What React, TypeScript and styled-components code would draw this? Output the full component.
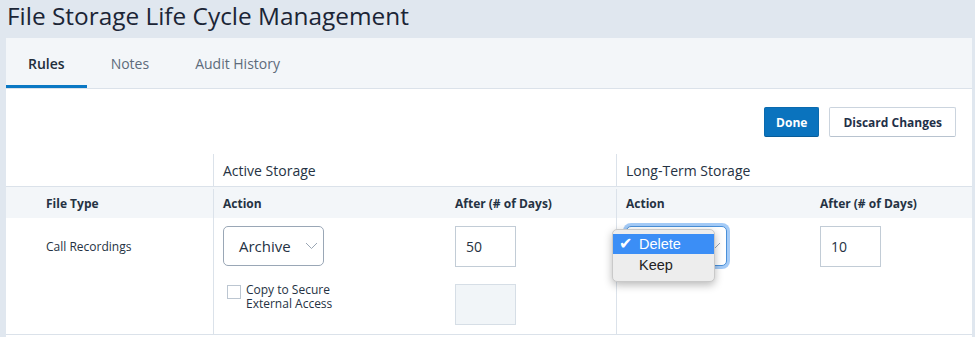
import React from "react";
import styled, { createGlobalStyle, css } from "styled-components";

const Global = createGlobalStyle`
  html, body { margin: 0; padding: 0; }
  body {
    background: #e0e7ef;
    font-family: "Open Sans", "Noto Sans", sans-serif;
    color: #253243;
    width: 975px;
    height: 337px;
    overflow: hidden;
  }
  * { box-sizing: border-box; }
`;

const Title = styled.h1`
  margin: 0;
  height: 38px;
  padding: 0 7px;
  font-size: 24.4px;
  line-height: 31px;
  font-weight: 400;
  color: #1b2536;
  white-space: nowrap;
`;

const Panel = styled.div`
  margin-left: 6px;
  width: 966px;
  background: #ffffff;
  height: 299px;
`;

const TabBar = styled.div`
  display: flex;
  height: 51px;
  background: #f3f6f9;
  border-bottom: 1px solid #dbe2ea;
`;

const Tab = styled.div<{ $active?: boolean }>`
  display: flex;
  align-items: center;
  padding: 0 22px;
  margin-right: 2px;
  font-size: 14px;
  font-weight: ${(p) => (p.$active ? 600 : 400)};
  color: ${(p) => (p.$active ? "#222e3c" : "#5d6b7b")};
  ${(p) =>
    p.$active &&
    css`
      box-shadow: inset 0 -3px 0 #0a78c4;
    `}
`;

const Toolbar = styled.div`
  display: flex;
  justify-content: flex-end;
  gap: 10px;
  padding: 18px 16px 0 0;
`;

const Button = styled.button<{ $primary?: boolean }>`
  height: 30px;
  padding: 0 ${(p) => (p.$primary ? "11px" : "13px")};
  font-family: "Open Sans", sans-serif;
  font-size: 12px;
  font-weight: 700;
  border-radius: 2px;
  cursor: pointer;
  ${(p) =>
    p.$primary
      ? css`
          background: #0a73be;
          color: #ffffff;
          border: 1px solid #0a6aae;
          border-bottom-color: #085c98;
        `
      : css`
          background: #ffffff;
          color: #1f3048;
          border: 1px solid #cbd4de;
          border-bottom-color: #b8c3cf;
        `}
`;

const Table = styled.div`
  margin-top: 14px;
  border-bottom: 1px solid #dbe2ea;
`;

const Row = styled.div<{ $variant: "group" | "head" | "body" }>`
  display: grid;
  grid-template-columns: 207px 232px 171px 194px 162px;
  ${(p) =>
    p.$variant === "group" &&
    css`
      height: 35px;
      padding-top: 3px;
    `}
  ${(p) =>
    p.$variant === "head" &&
    css`
      height: 32px;
      padding-top: 2px;
      background: #f3f6f9;
      border-top: 1px solid #dbe2ea;
    `}
  ${(p) =>
    p.$variant === "body" &&
    css`
      height: 116px;
    `}
`;

const Cell = styled.div<{ $divider?: boolean; $span?: number; $first?: boolean; $kind?: "group" | "head" | "body" }>`
  display: flex;
  flex-direction: column;
  justify-content: ${(p) => (p.$kind === "body" ? "flex-start" : "center")};
  gap: 17px;
  padding: ${(p) => (p.$kind === "body" ? "8px" : "0")} 10px 0
    ${(p) => (p.$first ? "40px" : p.$divider ? "9px" : "10px")};
  ${(p) => p.$span && css`grid-column: span ${p.$span};`}
  border-left: ${(p) => (p.$divider ? "1px solid #dbe2ea" : "none")};
  font-size: ${(p) => (p.$kind === "group" ? "14px" : "12px")};
  font-weight: ${(p) => (p.$kind === "head" ? 700 : 400)};
  color: #253243;
  white-space: nowrap;
`;

const BodyText = styled.div`
  height: 40px;
  display: flex;
  align-items: center;
  font-size: 12px;
  color: #253243;
`;

const SelectWrap = styled.div`
  position: relative;
  width: 101px;
`;

const SelectBox = styled.div<{ $focused?: boolean }>`
  width: 101px;
  height: 40px;
  display: flex;
  align-items: center;
  justify-content: space-between;
  padding: 0 5px 0 15px;
  border-radius: 5px;
  font-size: 15px;
  color: #253243;
  background: #fff;
  border: 1px solid ${(p) => (p.$focused ? "#4a90d9" : "#9aa7b6")};
  ${(p) =>
    p.$focused &&
    css`
      box-shadow: 0 0 0 3px rgba(90, 160, 240, 0.55);
    `}
`;

const Chevron = () => (
  <svg width="13" height="8" viewBox="0 0 13 8">
    <polyline points="1,1 6.5,6.5 12,1" fill="none" stroke="#9aa6b4" strokeWidth="1" />
  </svg>
);

const Menu = styled.div`
  position: absolute;
  left: -14px;
  top: 3px;
  width: 103px;
  padding: 4px 0 5px;
  background: #ededed;
  border: 1px solid #c9c9c9;
  border-radius: 5px;
  box-shadow: 0 3px 9px rgba(0, 0, 0, 0.28);
  font-family: "Liberation Sans", Arial, sans-serif;
  font-size: 14.5px;
  z-index: 2;
`;

const MenuItem = styled.div<{ $selected?: boolean }>`
  display: flex;
  align-items: center;
  height: ${(p) => (p.$selected ? "20px" : "22px")};
  padding-left: 6px;
  color: ${(p) => (p.$selected ? "#ffffff" : "#222")};
  background: ${(p) => (p.$selected ? "#3b8ef6" : "transparent")};
`;

const Check = styled.span`
  width: 20px;
  font-family: "DejaVu Sans", sans-serif;
  font-size: 16px;
  line-height: 20px;
`;

const NumberInput = styled.div<{ $disabled?: boolean }>`
  width: 61px;
  height: 41px;
  display: flex;
  align-items: center;
  padding-left: 10px;
  font-size: 14px;
  color: #253243;
  border: 1px solid ${(p) => (p.$disabled ? "#d6dee6" : "#c2ccd6")};
  background: ${(p) => (p.$disabled ? "#f1f5f8" : "#ffffff")};
`;

const CheckRow = styled.div`
  display: flex;
  align-items: flex-start;
  gap: 5px;
  padding-left: 4px;
`;

const CheckBox = styled.span`
  width: 14px;
  height: 14px;
  margin-top: 2px;
  border: 1px solid #bcc6d1;
  background: #fff;
  flex: none;
`;

const CheckLabel = styled.span`
  font-size: 12px;
  line-height: 14px;
  color: #253243;
  white-space: normal;
`;

export default function App() {
  return (
    <>
      <Global />
      <Title>File Storage Life Cycle Management</Title>
      <Panel>
        <TabBar>
          <Tab $active>Rules</Tab>
          <Tab>Notes</Tab>
          <Tab>Audit History</Tab>
        </TabBar>
        <Toolbar>
          <Button $primary>Done</Button>
          <Button>Discard Changes</Button>
        </Toolbar>
        <Table>
          <Row $variant="group">
            <Cell $kind="group" $first />
            <Cell $kind="group" $divider $span={2}>Active Storage</Cell>
            <Cell $kind="group" $divider $span={2}>Long-Term Storage</Cell>
          </Row>
          <Row $variant="head">
            <Cell $kind="head" $first>File Type</Cell>
            <Cell $kind="head" $divider>Action</Cell>
            <Cell $kind="head">After (# of Days)</Cell>
            <Cell $kind="head" $divider>Action</Cell>
            <Cell $kind="head">After (# of Days)</Cell>
          </Row>
          <Row $variant="body">
            <Cell $kind="body" $first>
              <BodyText>Call Recordings</BodyText>
            </Cell>
            <Cell $kind="body" $divider>
              <SelectWrap>
                <SelectBox>
                  <span>Archive</span>
                  <Chevron />
                </SelectBox>
              </SelectWrap>
              <CheckRow>
                <CheckBox />
                <CheckLabel>
                  Copy to Secure
                  <br />
                  External Access
                </CheckLabel>
              </CheckRow>
            </Cell>
            <Cell $kind="body">
              <NumberInput>50</NumberInput>
              <NumberInput $disabled />
            </Cell>
            <Cell $kind="body" $divider>
              <SelectWrap>
                <SelectBox $focused>
                  <span>Delete</span>
                  <Chevron />
                </SelectBox>
                <Menu>
                  <MenuItem $selected>
                    <Check>✔</Check>
                    Delete
                  </MenuItem>
                  <MenuItem>
                    <Check />
                    Keep
                  </MenuItem>
                </Menu>
              </SelectWrap>
            </Cell>
            <Cell $kind="body">
              <NumberInput>10</NumberInput>
            </Cell>
          </Row>
        </Table>
      </Panel>
    </>
  );
}
